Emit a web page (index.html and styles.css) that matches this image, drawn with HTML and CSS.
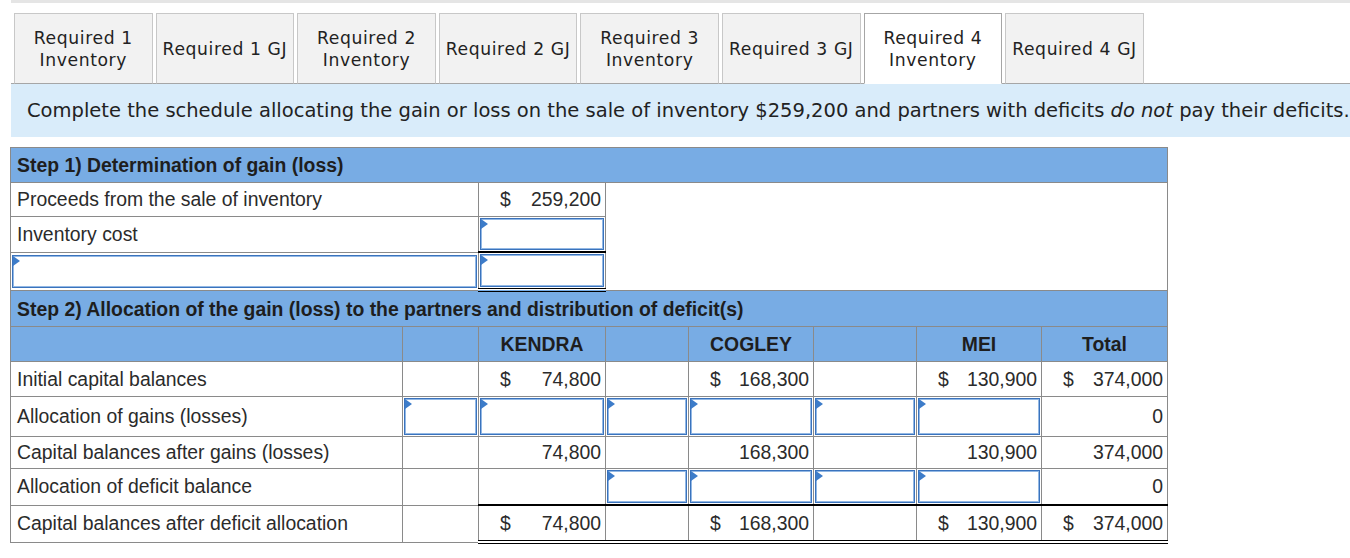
FILE: index.html
```html
<!DOCTYPE html>
<html lang="en">
<head>
    <meta charset="UTF-8">
    <meta name="viewport" content="width=device-width, initial-scale=1.0">
    <title>Partnership Liquidation Schedule</title>
    <link rel="stylesheet" href="styles.css">
</head>
<body>
    <div class="page">
        <div class="topbar"></div>
        <div class="tabs">
            <button class="tab">Required 1<br>Inventory</button>
            <button class="tab">Required 1 GJ</button>
            <button class="tab">Required 2<br>Inventory</button>
            <button class="tab">Required 2 GJ</button>
            <button class="tab">Required 3<br>Inventory</button>
            <button class="tab">Required 3 GJ</button>
            <button class="tab active">Required 4<br>Inventory</button>
            <button class="tab">Required 4 GJ</button>
        </div>
        <div class="instructions">Complete the schedule allocating the gain or loss on the sale of inventory $259,200 and partners with deficits <em>do not</em> pay their deficits.</div>

        <table class="sched">
            <colgroup>
                <col style="width:392px">
                <col style="width:76px">
                <col style="width:127px">
                <col style="width:83px">
                <col style="width:125px">
                <col style="width:103px">
                <col style="width:125px">
                <col style="width:126px">
            </colgroup>
            <tr class="step"><th colspan="8">Step 1) Determination of gain (loss)</th></tr>
            <tr class="r-proc">
                <td colspan="2" class="lbl">Proceeds from the sale of inventory</td>
                <td class="num"><span>$</span><span>259,200</span></td>
                <td colspan="5" rowspan="3" class="blank"></td>
            </tr>
            <tr class="r-cost">
                <td colspan="2" class="lbl">Inventory cost</td>
                <td class="inp ul"><div class="box"></div></td>
            </tr>
            <tr class="r-net">
                <td colspan="2" class="inp"><div class="box"></div></td>
                <td class="inp dbl"><div class="box"></div></td>
            </tr>

            <tr class="step"><th colspan="8">Step 2) Allocation of the gain (loss) to the partners and distribution of deficit(s)</th></tr>
            <tr class="cols">
                <th></th><th></th><th>KENDRA</th><th></th><th>COGLEY</th><th></th><th>MEI</th><th>Total</th>
            </tr>
            <tr class="r-init">
                <td class="lbl">Initial capital balances</td>
                <td></td>
                <td class="num"><span>$</span><span>74,800</span></td>
                <td></td>
                <td class="num"><span>$</span><span>168,300</span></td>
                <td></td>
                <td class="num"><span>$</span><span>130,900</span></td>
                <td class="num"><span>$</span><span>374,000</span></td>
            </tr>
            <tr class="r-gain">
                <td class="lbl">Allocation of gains (losses)</td>
                <td class="inp"><div class="box"></div></td>
                <td class="inp"><div class="box"></div></td>
                <td class="inp"><div class="box"></div></td>
                <td class="inp"><div class="box"></div></td>
                <td class="inp"><div class="box"></div></td>
                <td class="inp"><div class="box"></div></td>
                <td class="num right">0</td>
            </tr>
            <tr class="r-after">
                <td class="lbl">Capital balances after gains (losses)</td>
                <td></td>
                <td class="num right">74,800</td>
                <td></td>
                <td class="num right">168,300</td>
                <td></td>
                <td class="num right">130,900</td>
                <td class="num right">374,000</td>
            </tr>
            <tr class="r-def">
                <td class="lbl">Allocation of deficit balance</td>
                <td></td>
                <td class="ul"></td>
                <td class="inp ul"><div class="box"></div></td>
                <td class="inp ul"><div class="box"></div></td>
                <td class="inp ul"><div class="box"></div></td>
                <td class="inp ul"><div class="box"></div></td>
                <td class="num right ul">0</td>
            </tr>
            <tr class="r-final">
                <td class="lbl">Capital balances after deficit allocation</td>
                <td></td>
                <td class="num dbl"><span>$</span><span>74,800</span></td>
                <td class="dbl"></td>
                <td class="num dbl"><span>$</span><span>168,300</span></td>
                <td class="dbl"></td>
                <td class="num dbl"><span>$</span><span>130,900</span></td>
                <td class="num dbl"><span>$</span><span>374,000</span></td>
            </tr>
        </table>
    </div>
</body>
</html>
```

FILE: styles.css
```css
body {
    margin: 0;
    background-color: #fff;
    font-family: "DejaVu Sans", Verdana, sans-serif;
    color: #222;
}

.page {
    padding-left: 10px;
}

.topbar {
    margin-left: 1px;
    height: 3px;
    background-color: #e5e5e5;
}

.tabs {
    display: flex;
    gap: 3px;
    margin: 10px 0 0 1px;
    padding-left: 3px;
    border-bottom: 1px solid #a6a6a6;
}

.tab {
    width: 138.6px;
    height: 71px;
    margin-bottom: -1px;
    padding: 0;
    border: 1px solid #c8c8c8;
    border-bottom: 1px solid #a6a6a6;
    background-color: #f2f2f2;
    font-family: "DejaVu Sans", Verdana, sans-serif;
    font-size: 17.2px;
    letter-spacing: 0.6px;
    line-height: 22px;
    color: #222;
    cursor: pointer;
}

.tab.active {
    background-color: #fff;
    border-color: #a6a6a6;
    border-bottom-color: #fff;
}

.instructions {
    margin-left: 1px;
    height: 53px;
    padding-left: 16px;
    background-color: #d9ecfa;
    font-size: 19.5px;
    line-height: 54px;
    white-space: nowrap;
    overflow: hidden;
}

.sched {
    margin-top: 10px;
    border-collapse: collapse;
    table-layout: fixed;
    width: 1158px;
    font-family: "Liberation Sans", Arial, sans-serif;
    font-size: 19.4px;
    color: #2b2b2b;
}

.sched th,
.sched td {
    border: 1px solid #8a8a8a;
    padding: 0 4px;
    vertical-align: middle;
    white-space: nowrap;
}

.sched tr.step th {
    height: 34px;
    padding-left: 6px;
    text-align: left;
    background-color: #78ace4;
    color: #1e1e1e;
}

.sched tr.cols th {
    height: 34px;
    background-color: #78ace4;
    text-align: center;
    color: #1e1e1e;
}

/* row heights, tuned against the collapsed border model */
.r-proc td { height: 33px; }
.r-cost td { height: 32px; }
.r-net td { height: 33px; }
.r-init td { height: 34px; }
.r-gain td { height: 37px; }
.r-after td { height: 31px; }
.r-def td { height: 33px; }
.r-final td { height: 34px; }

.r-cost .box { height: 32px; }
.r-net .box { height: 33px; }
.r-gain .box { height: 37px; }
.r-def .box { height: 33px; }

.sched td.lbl {
    padding-left: 6px;
}

.sched td.num {
    padding: 0 4px 0 21px;
}

.num span:first-child {
    float: left;
}

.num span:last-child {
    float: right;
}

.sched td.right {
    text-align: right;
}

.sched td.inp {
    padding: 1px;
}

.box {
    position: relative;
    box-sizing: border-box;
    border: 1px solid #3a73bd;
    box-shadow: inset 0 0 0 1px #93b8e4;
    background-color: #fff;
}

.box::before {
    content: "";
    position: absolute;
    top: 0;
    left: 0;
    border-left: 7px solid #3d7cc9;
    border-top: 5px solid transparent;
    border-bottom: 5px solid transparent;
}

.sched td.ul {
    border-bottom: 2px solid #000;
}

.sched td.dbl {
    border-bottom: 4px double #000;
}
```
